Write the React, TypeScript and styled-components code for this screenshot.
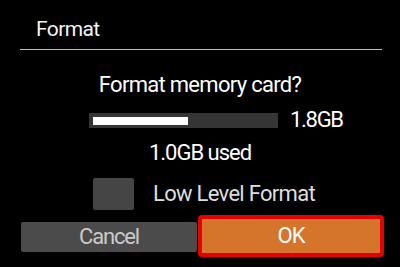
import styled, { createGlobalStyle } from 'styled-components';

const GlobalStyle = createGlobalStyle`
  html, body {
    margin: 0;
    padding: 0;
    background: #000;
  }
  body {
    font-family: Roboto, 'Liberation Sans', sans-serif;
  }
`;

const usedGb = 1.0;
const totalGb = 1.8;

export default function App() {
  return (
    <Screen>
      <GlobalStyle />
      <Header>
        <Title>Format</Title>
      </Header>
      <Question>Format memory card?</Question>
      <CapacityRow>
        <Bar>
          <Fill style={{ width: `${(usedGb / totalGb) * 94.5}%` }} />
        </Bar>
        <Label>1.8GB</Label>
      </CapacityRow>
      <Used>1.0GB used</Used>
      <CheckRow>
        <CheckBox />
        <CheckLabel>Low Level Format</CheckLabel>
      </CheckRow>
      <Buttons>
        <Button>Cancel</Button>
        <Button $primary>OK</Button>
      </Buttons>
    </Screen>
  );
}

const Screen = styled.div`
  width: 400px;
  height: 267px;
  background: #000;
  color: #fff;
  display: flex;
  flex-direction: column;
  overflow: hidden;
`;

const Header = styled.div`
  margin: 0 18px 0 20px;
  padding: 19px 0 9px 16px;
  border-bottom: 1px solid #bdbdbd;
`;

const Title = styled.div`
  font-size: 21px;
  line-height: 21px;
  letter-spacing: -0.6px;
  color: #f4f4f4;
`;

const Question = styled.div`
  margin-top: 24px;
  text-align: center;
  font-size: 22px;
  line-height: 22px;
  letter-spacing: -0.7px;
`;

const CapacityRow = styled.div`
  margin-top: 13px;
  padding-left: 89px;
  display: flex;
  align-items: flex-start;
  gap: 12px;
`;

const Bar = styled.div`
  margin-top: 4px;
  width: 189px;
  height: 15px;
  box-sizing: border-box;
  padding: 4px 4px 3px 4px;
  background: #353535;
  display: flex;
`;

const Fill = styled.div`
  height: 8px;
  background: #fff;
`;

const Label = styled.div`
  font-size: 22px;
  line-height: 22px;
  letter-spacing: -1.3px;
`;

const Used = styled.div`
  margin-top: 11px;
  text-align: center;
  font-size: 22px;
  line-height: 22px;
  letter-spacing: -1px;
`;

const CheckRow = styled.div`
  margin-top: 14px;
  padding-left: 93px;
  display: flex;
  align-items: center;
  gap: 19px;
`;

const CheckBox = styled.div`
  width: 41px;
  height: 32px;
  border-radius: 2px;
  background: #454545;
`;

const CheckLabel = styled.div`
  font-size: 22px;
  line-height: 22px;
  letter-spacing: -0.7px;
  color: #dedede;
`;

const Buttons = styled.div`
  margin-top: 5px;
  padding-left: 21px;
  display: flex;
  align-items: flex-start;
  gap: 1px;
`;

const Button = styled.div<{ $primary?: boolean }>`
  box-sizing: border-box;
  width: ${(p) => (p.$primary ? 186 : 176)}px;
  height: ${(p) => (p.$primary ? 42 : 30)}px;
  margin-top: ${(p) => (p.$primary ? 0 : 7)}px;
  border: ${(p) => (p.$primary ? '4px solid #e60000' : 'none')};
  border-radius: ${(p) => (p.$primary ? 4 : 2)}px;
  background: ${(p) => (p.$primary ? '#d5742b' : '#4b4b4b')};
  color: ${(p) => (p.$primary ? '#fff' : '#cacaca')};
  font-size: 22px;
  line-height: ${(p) => (p.$primary ? 34 : 30)}px;
  letter-spacing: ${(p) => (p.$primary ? -1 : -1.2)}px;
  text-align: center;
`;
